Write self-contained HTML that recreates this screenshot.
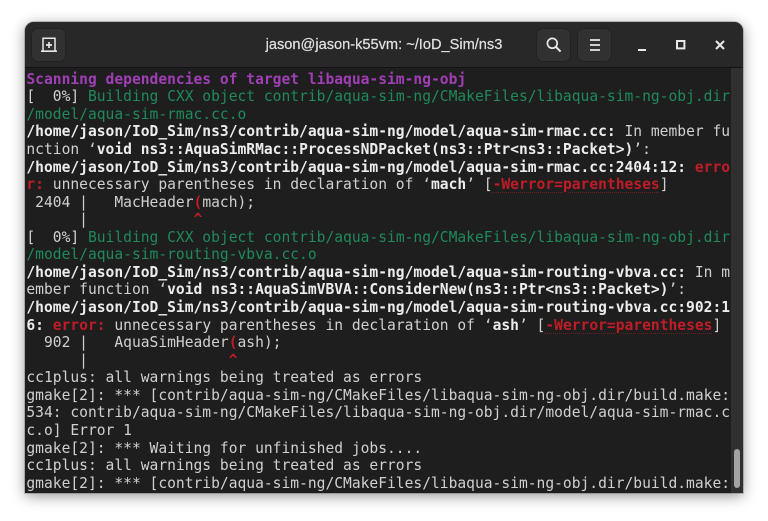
<!DOCTYPE html>
<html>
<head>
<meta charset="utf-8">
<style>
html,body{margin:0;padding:0;width:768px;height:521px;background:#fff;overflow:hidden}
#win{position:absolute;left:25px;top:22px;width:718px;height:471px;background:#1e1e1e;border-radius:9px 9px 0 0;box-shadow:0 3px 14px rgba(0,0,0,.42),0 0 0 1px rgba(0,0,0,.18);overflow:hidden}
#hd{position:absolute;left:0;top:0;width:718px;height:45px;background:#282828;border-bottom:1px solid #121212}
.b{position:absolute;top:7px;width:33px;height:32px;background:#313131;border-radius:6px;box-shadow:0 0 0 1px #222}
.t{position:absolute;left:0;top:0;width:718px;text-align:center;color:#e2e2e2;font:400 14.6px/46px "Liberation Sans",sans-serif;-webkit-text-stroke:.2px #e2e2e2;filter:blur(.25px)}
#sb{position:absolute;left:706px;top:46px;width:12px;height:425px;background:#303030}
#th{position:absolute;left:3px;top:381px;width:6px;height:39px;background:#a3a3a3;border-radius:3px}
#term{position:absolute;left:1.4px;top:48.7px;width:704px;font:14.62px/17.57px "DejaVu Sans Mono","Liberation Mono",monospace;color:#d0d0d0;white-space:pre;filter:blur(.25px)}
.l{display:block;height:17.57px}
b{color:#ececec;font-weight:700}
.p{color:#a03fb5;font-weight:700}
.g{color:#1f8a5b}
.r{color:#c01c28;font-weight:700}
.u{color:#c01c28;font-weight:700;text-decoration:underline dotted #6e2027 1px;text-underline-offset:3px}
svg{position:absolute}
</style>
</head>
<body>
<div id="win">
<div id="hd">
<div class="b" style="left:7px"></div>
<svg style="left:15px;top:13px" width="18" height="20" viewBox="0 0 18 20" fill="none" stroke="#e8e8e8"><path d="M3 16V3.3h12V16" stroke-width="1.5"/><path d="M1 16.2h16" stroke-width="1.7"/><path d="M9 7v6M6 10h6" stroke-width="1.7"/></svg>
<div class="t">jason@jason-k55vm: ~/IoD_Sim/ns3</div>
<div class="b" style="left:512px"></div>
<svg style="left:520px;top:14px" width="18" height="18" viewBox="0 0 18 18" fill="none" stroke="#e8e8e8"><circle cx="7.3" cy="7.3" r="4.9" stroke-width="1.7"/><path d="M11 11l4.6 4.6" stroke-width="2"/></svg>
<div class="b" style="left:553px"></div>
<svg style="left:561px;top:14px" width="18" height="18" viewBox="0 0 18 18" fill="none" stroke="#e8e8e8" stroke-width="1.7"><path d="M4 4h10M4 9h10M4 14h10"/></svg>
<svg style="left:608px;top:14px" width="18" height="18" viewBox="0 0 18 18" fill="none" stroke="#e8e8e8" stroke-width="2"><path d="M5 14h8"/></svg>
<svg style="left:647px;top:14px" width="18" height="18" viewBox="0 0 18 18" fill="none" stroke="#e8e8e8" stroke-width="2"><rect x="5" y="5" width="7.4" height="7.4"/></svg>
<svg style="left:686px;top:14px" width="18" height="18" viewBox="0 0 18 18" fill="none" stroke="#e8e8e8" stroke-width="2"><path d="M5 5l8 8M13 5l-8 8"/></svg>
</div>
<div id="term"><span class="l"><span class="p">Scanning dependencies of target libaqua-sim-ng-obj</span></span><span class="l">[  0%] <span class="g">Building CXX object contrib/aqua-sim-ng/CMakeFiles/libaqua-sim-ng-obj.dir</span></span><span class="l"><span class="g">/model/aqua-sim-rmac.cc.o</span></span><span class="l"><b>/home/jason/IoD_Sim/ns3/contrib/aqua-sim-ng/model/aqua-sim-rmac.cc:</b> In member fu</span><span class="l">nction ‘<b>void ns3::AquaSimRMac::ProcessNDPacket(ns3::Ptr&lt;ns3::Packet&gt;)</b>’:</span><span class="l"><b>/home/jason/IoD_Sim/ns3/contrib/aqua-sim-ng/model/aqua-sim-rmac.cc:2404:12:</b> <span class="r">erro</span></span><span class="l"><span class="r">r:</span> unnecessary parentheses in declaration of ‘<b>mach</b>’ [<span class="u">-Werror=parentheses</span>]</span><span class="l"> 2404 |   MacHeader<span class="r">(</span>mach);</span><span class="l">      |            <span class="r">^</span></span><span class="l">[  0%] <span class="g">Building CXX object contrib/aqua-sim-ng/CMakeFiles/libaqua-sim-ng-obj.dir</span></span><span class="l"><span class="g">/model/aqua-sim-routing-vbva.cc.o</span></span><span class="l"><b>/home/jason/IoD_Sim/ns3/contrib/aqua-sim-ng/model/aqua-sim-routing-vbva.cc:</b> In m</span><span class="l">ember function ‘<b>void ns3::AquaSimVBVA::ConsiderNew(ns3::Ptr&lt;ns3::Packet&gt;)</b>’:</span><span class="l"><b>/home/jason/IoD_Sim/ns3/contrib/aqua-sim-ng/model/aqua-sim-routing-vbva.cc:902:1</b></span><span class="l"><b>6:</b> <span class="r">error:</span> unnecessary parentheses in declaration of ‘<b>ash</b>’ [<span class="u">-Werror=parentheses</span>]</span><span class="l">  902 |   AquaSimHeader<span class="r">(</span>ash);</span><span class="l">      |                <span class="r">^</span></span><span class="l">cc1plus: all warnings being treated as errors</span><span class="l">gmake[2]: *** [contrib/aqua-sim-ng/CMakeFiles/libaqua-sim-ng-obj.dir/build.make:</span><span class="l">534: contrib/aqua-sim-ng/CMakeFiles/libaqua-sim-ng-obj.dir/model/aqua-sim-rmac.c</span><span class="l">c.o] Error 1</span><span class="l">gmake[2]: *** Waiting for unfinished jobs....</span><span class="l">cc1plus: all warnings being treated as errors</span><span class="l">gmake[2]: *** [contrib/aqua-sim-ng/CMakeFiles/libaqua-sim-ng-obj.dir/build.make:</span></div>
<div id="sb"><div id="th"></div></div>
</div>
</body>
</html>
